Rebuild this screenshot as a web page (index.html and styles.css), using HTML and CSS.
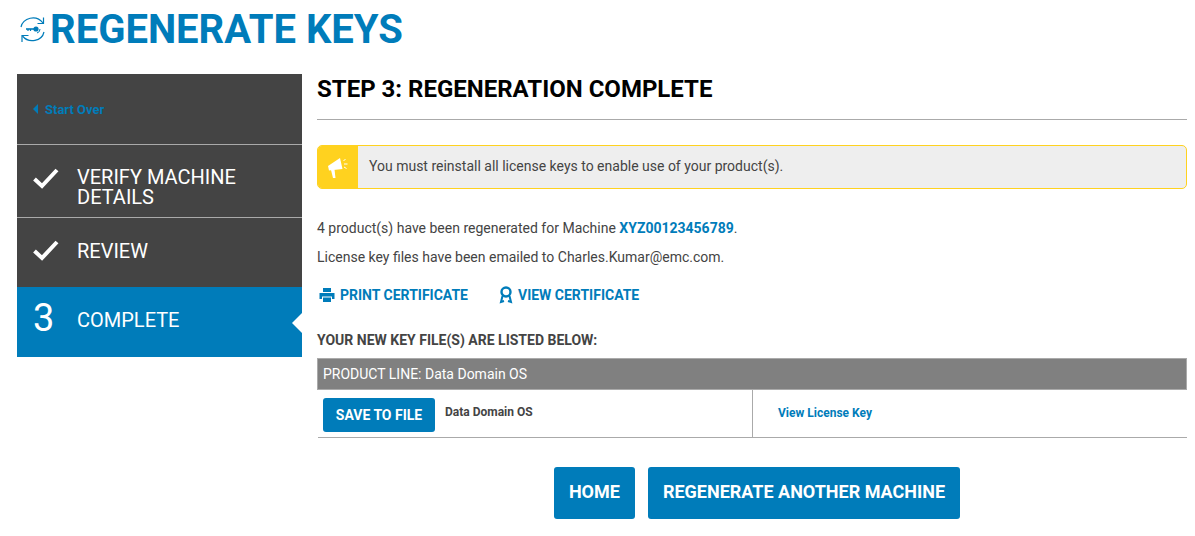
FILE: index.html
```html
<!DOCTYPE html>
<html lang="en">
<head>
  <meta charset="UTF-8">
  <title>Regenerate Keys</title>
  <link rel="stylesheet" href="styles.css">
</head>
<body>
  <header class="page-title">
    <svg class="title-icon" width="30" height="30" viewBox="0 0 30 30" fill="none" stroke="#007cba" stroke-width="1.200">
      <path d="M2 12 C4 3 17 -1 24 8"/>
      <path d="M24.500 2.500 V8.500 H18.500"/>
      <path d="M25 17 C23 26 10 29 3.500 21"/>
      <path d="M3 27 V20.500 H9.500"/>
      <circle cx="17" cy="14" r="2.600" fill="#007cba" stroke="none"/>
      <path d="M7 14 H16" stroke-width="1.600"/>
      <path d="M9 14 V16 M11.500 14 V16"/>
      <path d="M21 14 A4 4 0 0 1 18 18" stroke-width="1"/>
    </svg>
    <h1>REGENERATE KEYS</h1>
  </header>
  <div class="layout">
    <aside class="sidebar">
      <div class="start-over"><a href="#"><span class="caret"></span>Start Over</a></div>
      <div class="step step-first">
        <svg class="check" width="28" height="22" viewBox="0 0 28 22"><path d="M2.500 12 L10 19 L25 3" fill="none" stroke="#fff" stroke-width="4"/></svg>
        <span class="step-label">VERIFY MACHINE DETAILS</span>
      </div>
      <div class="step step-second">
        <svg class="check" width="28" height="22" viewBox="0 0 28 22"><path d="M2.500 12 L10 19 L25 3" fill="none" stroke="#fff" stroke-width="4"/></svg>
        <span class="step-label">REVIEW</span>
      </div>
      <div class="step step-active">
        <span class="step-num">3</span>
        <span class="step-label">COMPLETE</span>
      </div>
    </aside>
    <main class="content">
      <h2>STEP 3: REGENERATION COMPLETE</h2>
      <div class="notice">
        <div class="notice-icon">
          <svg width="24" height="24" viewBox="0 0 24 24" fill="#fff">
            <path d="M2 11 L14 3 L16.500 14 L3 15.500 Z"/>
            <path d="M5 15 L8.500 14.500 L9.500 23 L7 23 Z"/>
            <path d="M17.500 6 L19.500 4 M18 9 H21.500 M18 12 L20.500 13.500" stroke="#fff" stroke-width="1" fill="none"/>
          </svg>
        </div>
        <div class="notice-text">You must reinstall all license keys to enable use of your product(s).</div>
      </div>
      <p class="line line-first">4 product(s) have been regenerated for Machine <a href="#" class="machine">XYZ00123456789</a>.</p>
      <p class="line">License key files have been emailed to Charles.Kumar@emc.com.</p>
      <div class="cert-links">
        <a href="#">
          <svg width="16" height="16" viewBox="0 0 16 16" fill="#007cba">
            <path d="M4 1 H12 V5 H4 Z"/>
            <path d="M0.500 6 H15.500 V12 H13 V9.500 H3 V12 H0.500 Z"/>
            <path d="M4 10.500 H12 V15 H4 Z"/>
          </svg>
          PRINT CERTIFICATE
        </a>
        <a href="#">
          <svg width="14" height="18" viewBox="0 0 14 18" fill="none" stroke="#007cba" stroke-width="2.400">
            <circle cx="7" cy="6" r="4.500"/>
            <path d="M3.500 10 L2 16 L5 15 M10.500 10 L12 16 L9 15" stroke-width="2"/>
          </svg>
          VIEW CERTIFICATE
        </a>
      </div>
      <h3>YOUR NEW KEY FILE(S) ARE LISTED BELOW:</h3>
      <div class="product-head">PRODUCT LINE: Data Domain OS</div>
      <div class="product-row">
        <div class="product-left">
          <button class="btn-save">SAVE TO FILE</button>
          <span class="product-name">Data Domain OS</span>
        </div>
        <div class="product-right"><a href="#">View License Key</a></div>
      </div>
      <div class="actions">
        <button class="btn-big">HOME</button>
        <button class="btn-big">REGENERATE ANOTHER MACHINE</button>
      </div>
    </main>
  </div>
</body>
</html>
```

FILE: styles.css
```css
* {
  box-sizing: border-box;
}
body {
  margin: 0;
  background-color: #fff;
  font-family: Roboto, sans-serif;
  color: #444;
}
a {
  color: #007cba;
  text-decoration: none;
}
.page-title {
  display: flex;
  align-items: center;
  height: 60px;
  padding-left: 19px;
}
.title-icon {
  margin-right: 1px;
}
h1 {
  margin: 0;
  font-size: 40px;
  font-weight: 700;
  color: #007cba;
  line-height: 60px;
}
.layout {
  display: flex;
  align-items: flex-start;
  margin-top: 14px;
  padding-left: 17px;
}
.sidebar {
  width: 285px;
  flex-shrink: 0;
  background-color: #444;
}
.start-over {
  height: 70px;
  display: flex;
  align-items: center;
  padding: 0 0 0 16px;
  font-size: 13px;
  font-weight: 700;
}
.caret {
  display: inline-block;
  width: 0;
  height: 0;
  margin-right: 7px;
  border-top: 5px solid transparent;
  border-bottom: 5px solid transparent;
  border-right: 5px solid #007cba;
}
.step {
  display: flex;
  align-items: center;
  border-top: 1px solid #aaa;
  color: #fff;
  font-size: 20px;
  line-height: 20px;
  padding-left: 16px;
}
.step-first {
  height: 73px;
}
.step-first .step-label {
  margin-top: 12px;
}
.step-second {
  height: 70px;
}
.step-second .step-label,
.step-active .step-label {
  margin-bottom: 4px;
}
.check {
  flex-shrink: 0;
  width: 28px;
  margin-left: -1px;
  margin-right: 1px;
  margin-bottom: 6px;
}
.step-label {
  margin-left: 16px;
  width: 190px;
}
.step-active {
  position: relative;
  height: 70px;
  border-top: 0;
  background-color: #007cba;
}
.step-active::after {
  content: "";
  position: absolute;
  right: 0;
  top: 26px;
  border-top: 10px solid transparent;
  border-bottom: 10px solid transparent;
  border-right: 10px solid #fff;
}
.step-num {
  width: 28px;
  font-size: 38px;
  font-weight: 400;
  line-height: 60px;
  margin-bottom: 8px;
}
.content {
  width: 870px;
  margin-left: 15px;
}
h2 {
  margin: 0;
  height: 45px;
  border-bottom: 1px solid #aaa;
  box-sizing: content-box;
  font-size: 24px;
  font-weight: 700;
  color: #000;
  line-height: 30px;
}
.notice {
  display: flex;
  height: 44px;
  margin-top: 25px;
  border: 1px solid #ffd21f;
  border-radius: 5px;
  background-color: #eee;
  overflow: hidden;
}
.notice-icon {
  width: 40px;
  display: flex;
  align-items: center;
  justify-content: center;
  background-color: #ffd21f;
}
.notice-text {
  padding-left: 11px;
  font-size: 14px;
  line-height: 40px;
}
.line {
  margin: 0;
  font-size: 14px;
  line-height: 20px;
  height: 29px;
}
.line-first {
  margin-top: 29px;
}
.machine {
  font-weight: 700;
}
.cert-links {
  display: flex;
  gap: 31px;
  height: 34px;
  margin-top: 2px;
  padding-left: 2px;
  align-items: center;
  font-size: 14px;
  font-weight: 700;
}
.cert-links a {
  display: flex;
  align-items: center;
  gap: 5px;
}
h3 {
  margin: 0;
  padding-top: 18px;
  font-size: 14px;
  font-weight: 700;
  line-height: 20px;
  height: 46px;
}
.product-head {
  height: 32px;
  padding-left: 5px;
  border: 1px solid #aaa;
  background-color: #808080;
  color: #fff;
  font-size: 14px;
  line-height: 30px;
}
.product-row {
  display: flex;
  height: 48px;
  margin-left: 1px;
  border-bottom: 1px solid #aaa;
}
.product-left {
  width: 435px;
  display: flex;
  align-items: center;
  padding-left: 5px;
  padding-top: 2px;
  border-right: 1px solid #aaa;
}
.btn-save {
  width: 112px;
  height: 34px;
  border: 0;
  border-radius: 3px;
  background-color: #007cba;
  color: #fff;
  font-family: Roboto, sans-serif;
  font-size: 14px;
  font-weight: 700;
  padding: 0;
}
.product-name {
  margin-left: 10px;
  margin-bottom: 5px;
  font-size: 12px;
  font-weight: 700;
}
.product-right {
  padding-left: 25px;
  padding-top: 16px;
  font-size: 12px;
  font-weight: 700;
}
.actions {
  display: flex;
  justify-content: center;
  gap: 13px;
  margin-top: 29px;
  padding-left: 10px;
}
.btn-big {
  height: 52px;
  padding: 0 15px 4px;
  border: 0;
  border-radius: 3px;
  background-color: #007cba;
  color: #fff;
  font-family: Roboto, sans-serif;
  font-size: 18px;
  font-weight: 700;
}
```
